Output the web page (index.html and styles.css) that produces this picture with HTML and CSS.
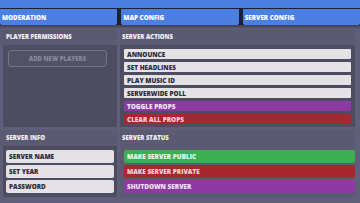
FILE: index.html
```html
<!DOCTYPE html>
<html lang="en">
<head>
  <meta charset="UTF-8" />
  <meta name="viewport" content="width=device-width, initial-scale=1.0"/>
  <title>Admin Panel</title>
  <link rel="stylesheet" href="styles.css">
</head>
<body>

  <div class="topbar"></div>

  <!-- Abas -->
  <nav class="tabs">
    <div class="tab">MODERATION</div>
    <div class="tab">MAP CONFIG</div>
    <div class="tab">SERVER CONFIG</div>
  </nav>

  <div class="painel">
    <!-- Linha de cima -->
    <section class="secao">
      <div class="secao-titulo">PLAYER PERMISSIONS</div>
      <div class="secao-corpo">
        <div class="btn-add">ADD NEW PLAYERS</div>
      </div>
    </section>

    <section class="secao secao-direita">
      <div class="secao-titulo">SERVER ACTIONS</div>
      <div class="secao-corpo lista">
        <div class="item">ANNOUNCE</div>
        <div class="item">SET HEADLINES</div>
        <div class="item">PLAY MUSIC ID</div>
        <div class="item">SERVERWIDE POLL</div>
        <div class="item item-roxo">TOGGLE PROPS</div>
        <div class="item item-vermelho">CLEAR ALL PROPS</div>
      </div>
    </section>

    <!-- Linha de baixo -->
    <section class="secao">
      <div class="secao-titulo">SERVER INFO</div>
      <div class="secao-corpo lista lista-grande">
        <div class="item">SERVER NAME</div>
        <div class="item">SET YEAR</div>
        <div class="item">PASSWORD</div>
      </div>
    </section>

    <section class="secao secao-direita">
      <div class="secao-titulo">SERVER STATUS</div>
      <div class="secao-corpo lista lista-grande">
        <div class="item item-verde">MAKE SERVER PUBLIC</div>
        <div class="item item-vermelho">MAKE SERVER PRIVATE</div>
        <div class="item item-roxo">SHUTDOWN SERVER</div>
      </div>
    </section>
  </div>

</body>
</html>
```

FILE: styles.css
```css
* {
  box-sizing: border-box;
}

body {
  margin: 0;
  width: 360px;
  height: 203px;
  overflow: hidden;
  background-color: #605f79;
  font-family: "Open Sans", "DejaVu Sans", sans-serif;
  font-weight: 800;
  font-size: 6px;
}

.topbar {
  height: 9px;
  background-color: #4b7fe2;
  border-bottom: 1px solid #1d1f33;
}

.tabs {
  display: flex;
  gap: 4px;
  height: 16px;
  background-color: #1d1f33;
}

.tab {
  flex: 1;
  display: flex;
  align-items: center;
  padding-left: 2px;
  background-color: #4b7fe2;
  border-radius: 0 0 2px 2px;
  color: #fff;
  font-size: 6.3px;
}

.painel {
  display: grid;
  grid-template-columns: 117px 235px;
  column-gap: 3px;
  padding-top: 4px;
  background: linear-gradient(#3e3d52 0, #605f79 4px);
}

.secao {
  display: flex;
  flex-direction: column;
}

.secao-titulo {
  height: 16px;
  display: flex;
  align-items: center;
  padding-left: 6px;
  background-color: #5b5a72;
  color: #f2f2f6;
}

.secao-direita .secao-titulo {
  padding-left: 2px;
}

.secao-corpo {
  margin-left: 3px;
  height: 82px;
  padding: 5px;
  background-color: #4d4c61;
}

.secao-direita .secao-corpo {
  margin-left: 0;
  padding: 4px 4px 3px 4px;
}

.btn-add {
  width: 99px;
  height: 17px;
  display: flex;
  align-items: center;
  justify-content: center;
  border: 1px solid #76758d;
  border-radius: 3px;
  background-color: #525166;
  color: #8a899f;
}

.lista {
  display: flex;
  flex-direction: column;
  gap: 3px;
}

.item {
  height: 10px;
  display: flex;
  align-items: center;
  padding-left: 3px;
  background-color: #e5e2e6;
  border-radius: 1px;
  color: #2b2a3a;
  font-size: 6.4px;
}

.item-roxo {
  background-color: #8d3ba2;
  color: #f3e3f6;
}

.item-vermelho {
  background-color: #a6272f;
  color: #f5d4dc;
}

.item-verde {
  background-color: #3daf52;
  color: #eaf8ec;
}

/* linha de baixo */
.painel .secao:nth-child(3),
.painel .secao:nth-child(4) {
  margin-top: 3px;
}

.lista-grande {
  height: 51px;
  padding: 4px 3px;
  gap: 2px;
}

.lista-grande .item {
  height: 13px;
  border-radius: 2px;
}

.secao-direita .lista-grande {
  padding: 4px 0 4px 4px;
  background-color: #5b5a72;
}
```
